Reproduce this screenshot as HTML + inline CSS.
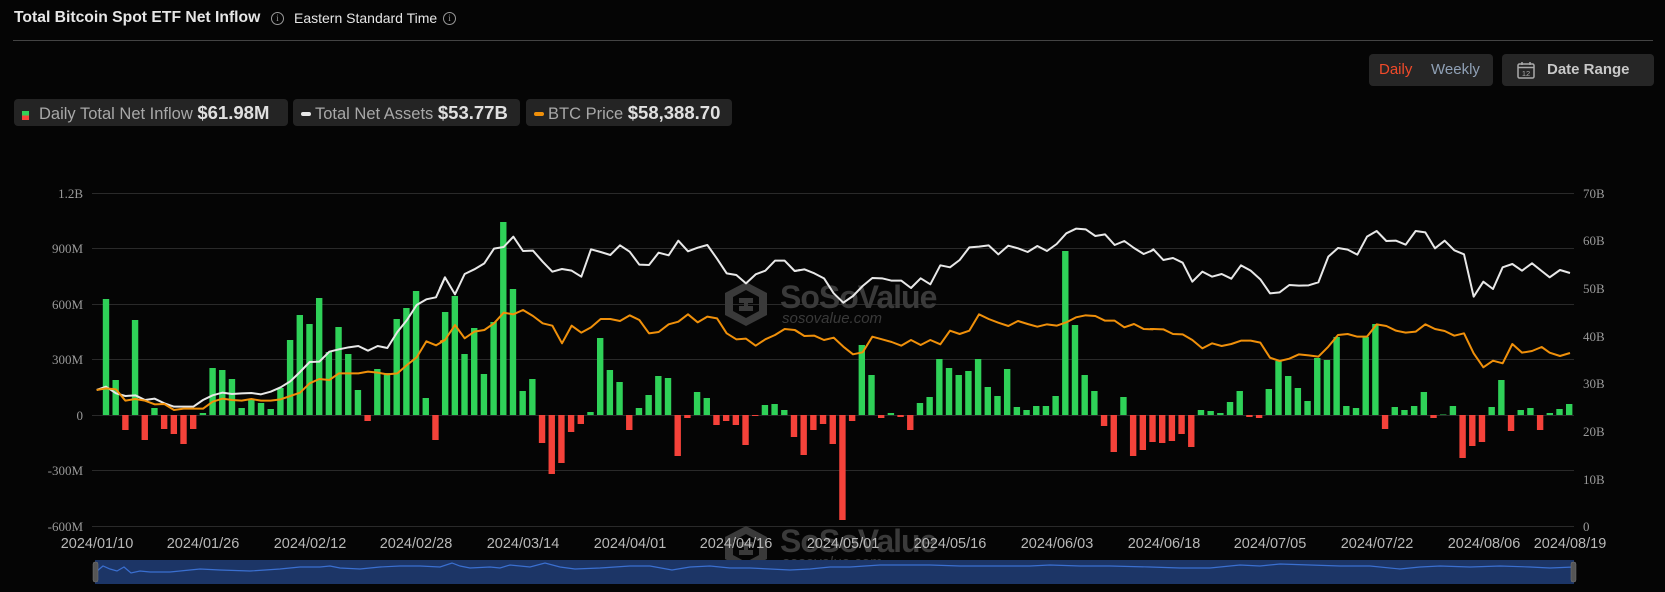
<!DOCTYPE html>
<html><head><meta charset="utf-8"><style>
*{margin:0;padding:0;box-sizing:border-box}
body{width:1665px;height:592px;background:#050505;font-family:"Liberation Sans",sans-serif;position:relative;overflow:hidden;color:#ddd}
.abs{position:absolute}
.title{left:14px;top:9px;font-size:15.7px;font-weight:bold;color:#e6e6e6;white-space:nowrap}
.est{left:294px;top:10px;font-size:14px;color:#e6e6e6;white-space:nowrap}
.info{width:13px;height:13px;border:1px solid #999;border-radius:50%;font-size:9px;color:#999;text-align:center;line-height:11px;font-family:"Liberation Serif",serif}
.sep{left:13px;top:40px;width:1640px;height:1px;background:#444}
.lg{top:99px;height:27px;background:#242424;border-radius:4px;white-space:nowrap;font-size:16.5px;color:#a8a8a8;line-height:27px;padding-left:8px}
.lg b{color:#e0e0e0;font-size:18.5px}
.btn{top:54px;height:32px;background:#262626;border-radius:4px;font-size:15px;line-height:32px}
</style></head><body>
<div class="abs title">Total Bitcoin Spot ETF Net Inflow</div>
<div class="abs info" style="left:271px;top:12px">i</div>
<div class="abs est">Eastern Standard Time</div>
<div class="abs info" style="left:443px;top:12px">i</div>
<div class="abs sep"></div>

<div class="abs btn" style="left:1369px;width:124px"><span style="position:absolute;left:10px;color:#f04a2a">Daily</span><span style="position:absolute;left:62px;color:#8fa0b5">Weekly</span></div>
<div class="abs btn" style="left:1502px;width:152px">
<svg style="position:absolute;left:14px;top:6px" width="20" height="20" viewBox="0 0 20 20"><rect x="2" y="4" width="16" height="14" rx="1.5" fill="none" stroke="#aaa" stroke-width="1.5"/><line x1="2" y1="7.5" x2="18" y2="7.5" stroke="#aaa" stroke-width="1.5"/><line x1="6" y1="2" x2="6" y2="5" stroke="#aaa" stroke-width="1.5"/><line x1="14" y1="2" x2="14" y2="5" stroke="#aaa" stroke-width="1.5"/><text x="10" y="16" font-size="7.5" fill="#aaa" text-anchor="middle" font-family="Liberation Sans">12</text></svg>
<span style="position:absolute;left:45px;font-weight:bold;color:#c8c8c8">Date Range</span></div>

<div class="abs lg" style="left:14px;width:274px"><span style="display:inline-block;width:7px;height:9px;vertical-align:-1px;background:linear-gradient(#2fd158 50%,#f5423a 50%);margin-right:10px"></span>Daily Total Net Inflow <b>$61.98M</b></div>
<div class="abs lg" style="left:293px;width:227px"><span style="display:inline-block;width:10px;height:4px;border-radius:2px;background:#e8e8e8;vertical-align:3px;margin-right:4px"></span>Total Net Assets <b>$53.77B</b></div>
<div class="abs lg" style="left:526px;width:206px"><span style="display:inline-block;width:10px;height:4px;border-radius:2px;background:#f0900a;vertical-align:3px;margin-right:4px"></span>BTC Price <b>$58,388.70</b></div>

<svg class="abs" style="left:0;top:0" width="1665" height="592">
<g stroke="#2a2a2a" stroke-width="1">
<line x1="92" y1="193.5" x2="1574" y2="193.5"/><line x1="92" y1="248.5" x2="1574" y2="248.5"/><line x1="92" y1="304.5" x2="1574" y2="304.5"/><line x1="92" y1="359.5" x2="1574" y2="359.5"/><line x1="92" y1="415.5" x2="1574" y2="415.5"/><line x1="92" y1="470.5" x2="1574" y2="470.5"/><line x1="92" y1="526.5" x2="1574" y2="526.5"/>
</g>
<g font-family="Liberation Serif,serif" font-size="13" fill="#9a9a9a" text-anchor="end">
<text x="83" y="198">1.2B</text><text x="83" y="253">900M</text><text x="83" y="309">600M</text><text x="83" y="364">300M</text><text x="83" y="420">0</text><text x="83" y="475">-300M</text><text x="83" y="531">-600M</text>
</g>
<g font-family="Liberation Serif,serif" font-size="13" fill="#9a9a9a">
<text x="1583" y="198">70B</text><text x="1583" y="245">60B</text><text x="1583" y="293">50B</text><text x="1583" y="341">40B</text><text x="1583" y="388">30B</text><text x="1583" y="436">20B</text><text x="1583" y="484">10B</text><text x="1583" y="531">0</text>
</g>
<g fill="#3a3a3a">
<g transform="translate(725,282)"><path d="M21 0 L42 11 L42 33 L21 44 L0 33 L0 11 Z M21 8 L8 15 L8 29 L21 36 L34 29 L34 15 Z" fill-rule="evenodd"/><path d="M14 16 h14 v5 h-9 v3 h9 v5 h-14 v-5 h9 v-3 h-9z"/></g>
<text x="780" y="308" font-size="32" font-weight="bold" font-family="Liberation Sans,sans-serif" letter-spacing="-1">SoSoValue</text>
<text x="782" y="323" font-size="15" font-style="italic" font-family="Liberation Sans,sans-serif">sosovalue.com</text>
<g transform="translate(725,526)"><path d="M21 0 L42 11 L42 33 L21 44 L0 33 L0 11 Z M21 8 L8 15 L8 29 L21 36 L34 29 L34 15 Z" fill-rule="evenodd"/><path d="M14 16 h14 v5 h-9 v3 h9 v5 h-14 v-5 h9 v-3 h-9z"/></g>
<text x="780" y="552" font-size="32" font-weight="bold" font-family="Liberation Sans,sans-serif" letter-spacing="-1">SoSoValue</text>
<text x="782" y="567" font-size="15" font-style="italic" font-family="Liberation Sans,sans-serif">sosovalue.com</text>
</g>
<g transform="translate(102.8,415) scale(9.69,-1)">
<g fill="#2fd158">
<rect x="0" y="0" width="0.66" height="116"/><rect x="1" y="0" width="0.66" height="35"/><rect x="3" y="0" width="0.66" height="95"/><rect x="5" y="0" width="0.66" height="7"/><rect x="10" y="0" width="0.66" height="2"/><rect x="11" y="0" width="0.66" height="47"/><rect x="12" y="0" width="0.66" height="45"/><rect x="13" y="0" width="0.66" height="36"/><rect x="14" y="0" width="0.66" height="7"/><rect x="15" y="0" width="0.66" height="15"/><rect x="16" y="0" width="0.66" height="12"/><rect x="17" y="0" width="0.66" height="6"/><rect x="18" y="0" width="0.66" height="27"/><rect x="19" y="0" width="0.66" height="75"/><rect x="20" y="0" width="0.66" height="100"/><rect x="21" y="0" width="0.66" height="91"/><rect x="22" y="0" width="0.66" height="117"/><rect x="23" y="0" width="0.66" height="63"/><rect x="24" y="0" width="0.66" height="88"/><rect x="25" y="0" width="0.66" height="61"/><rect x="26" y="0" width="0.66" height="25"/><rect x="28" y="0" width="0.66" height="46"/><rect x="29" y="0" width="0.66" height="42"/><rect x="30" y="0" width="0.66" height="96"/><rect x="31" y="0" width="0.66" height="107"/><rect x="32" y="0" width="0.66" height="124"/><rect x="33" y="0" width="0.66" height="17"/><rect x="35" y="0" width="0.66" height="103"/><rect x="36" y="0" width="0.66" height="119"/><rect x="37" y="0" width="0.66" height="61"/><rect x="38" y="0" width="0.66" height="87"/><rect x="39" y="0" width="0.66" height="41"/><rect x="40" y="0" width="0.66" height="93"/><rect x="41" y="0" width="0.66" height="193"/><rect x="42" y="0" width="0.66" height="126"/><rect x="43" y="0" width="0.66" height="24"/><rect x="44" y="0" width="0.66" height="36"/><rect x="50" y="0" width="0.66" height="3"/><rect x="51" y="0" width="0.66" height="77"/><rect x="52" y="0" width="0.66" height="45"/><rect x="53" y="0" width="0.66" height="33"/><rect x="55" y="0" width="0.66" height="7"/><rect x="56" y="0" width="0.66" height="20"/><rect x="57" y="0" width="0.66" height="39"/><rect x="58" y="0" width="0.66" height="37"/><rect x="61" y="0" width="0.66" height="23"/><rect x="62" y="0" width="0.66" height="17"/><rect x="68" y="0" width="0.66" height="10"/><rect x="69" y="0" width="0.66" height="11"/><rect x="70" y="0" width="0.66" height="5"/><rect x="78" y="0" width="0.66" height="70"/><rect x="79" y="0" width="0.66" height="40"/><rect x="81" y="0" width="0.66" height="2"/><rect x="84" y="0" width="0.66" height="12"/><rect x="85" y="0" width="0.66" height="18"/><rect x="86" y="0" width="0.66" height="56"/><rect x="87" y="0" width="0.66" height="47"/><rect x="88" y="0" width="0.66" height="40"/><rect x="89" y="0" width="0.66" height="44"/><rect x="90" y="0" width="0.66" height="56"/><rect x="91" y="0" width="0.66" height="28"/><rect x="92" y="0" width="0.66" height="19"/><rect x="93" y="0" width="0.66" height="46"/><rect x="94" y="0" width="0.66" height="8"/><rect x="95" y="0" width="0.66" height="5"/><rect x="96" y="0" width="0.66" height="9"/><rect x="97" y="0" width="0.66" height="9"/><rect x="98" y="0" width="0.66" height="19"/><rect x="99" y="0" width="0.66" height="164"/><rect x="100" y="0" width="0.66" height="90"/><rect x="101" y="0" width="0.66" height="40"/><rect x="102" y="0" width="0.66" height="24"/><rect x="105" y="0" width="0.66" height="18"/><rect x="113" y="0" width="0.66" height="5"/><rect x="114" y="0" width="0.66" height="4"/><rect x="115" y="0" width="0.66" height="2"/><rect x="116" y="0" width="0.66" height="13"/><rect x="117" y="0" width="0.66" height="24"/><rect x="120" y="0" width="0.66" height="26"/><rect x="121" y="0" width="0.66" height="54"/><rect x="122" y="0" width="0.66" height="39"/><rect x="123" y="0" width="0.66" height="27"/><rect x="124" y="0" width="0.66" height="14"/><rect x="125" y="0" width="0.66" height="57"/><rect x="126" y="0" width="0.66" height="55"/><rect x="127" y="0" width="0.66" height="78"/><rect x="128" y="0" width="0.66" height="9"/><rect x="129" y="0" width="0.66" height="7"/><rect x="130" y="0" width="0.66" height="78"/><rect x="131" y="0" width="0.66" height="91"/><rect x="133" y="0" width="0.66" height="8"/><rect x="134" y="0" width="0.66" height="5"/><rect x="135" y="0" width="0.66" height="9"/><rect x="136" y="0" width="0.66" height="23"/><rect x="138" y="0" width="0.66" height="0.5"/><rect x="139" y="0" width="0.66" height="9"/><rect x="143" y="0" width="0.66" height="8"/><rect x="144" y="0" width="0.66" height="35"/><rect x="146" y="0" width="0.66" height="5"/><rect x="147" y="0" width="0.66" height="7"/><rect x="149" y="0" width="0.66" height="2"/><rect x="150" y="0" width="0.66" height="6"/><rect x="151" y="0" width="0.66" height="11"/>
</g>
<g fill="#f5423a">
<rect x="2" y="-15" width="0.66" height="15"/><rect x="4" y="-25" width="0.66" height="25"/><rect x="6" y="-14" width="0.66" height="14"/><rect x="7" y="-19" width="0.66" height="19"/><rect x="8" y="-29" width="0.66" height="29"/><rect x="9" y="-14" width="0.66" height="14"/><rect x="27" y="-6" width="0.66" height="6"/><rect x="34" y="-25" width="0.66" height="25"/><rect x="45" y="-28" width="0.66" height="28"/><rect x="46" y="-59" width="0.66" height="59"/><rect x="47" y="-48" width="0.66" height="48"/><rect x="48" y="-17" width="0.66" height="17"/><rect x="49" y="-9" width="0.66" height="9"/><rect x="54" y="-15" width="0.66" height="15"/><rect x="59" y="-41" width="0.66" height="41"/><rect x="60" y="-3" width="0.66" height="3"/><rect x="63" y="-10" width="0.66" height="10"/><rect x="64" y="-6" width="0.66" height="6"/><rect x="65" y="-10" width="0.66" height="10"/><rect x="66" y="-30" width="0.66" height="30"/><rect x="67" y="-1" width="0.66" height="1"/><rect x="71" y="-22" width="0.66" height="22"/><rect x="72" y="-40" width="0.66" height="40"/><rect x="73" y="-15" width="0.66" height="15"/><rect x="74" y="-9" width="0.66" height="9"/><rect x="75" y="-29" width="0.66" height="29"/><rect x="76" y="-105" width="0.66" height="105"/><rect x="77" y="-6" width="0.66" height="6"/><rect x="80" y="-3" width="0.66" height="3"/><rect x="82" y="-2" width="0.66" height="2"/><rect x="83" y="-15" width="0.66" height="15"/><rect x="103" y="-11" width="0.66" height="11"/><rect x="104" y="-37" width="0.66" height="37"/><rect x="106" y="-41" width="0.66" height="41"/><rect x="107" y="-35" width="0.66" height="35"/><rect x="108" y="-27" width="0.66" height="27"/><rect x="109" y="-28" width="0.66" height="28"/><rect x="110" y="-26" width="0.66" height="26"/><rect x="111" y="-19" width="0.66" height="19"/><rect x="112" y="-32" width="0.66" height="32"/><rect x="118" y="-2" width="0.66" height="2"/><rect x="119" y="-3" width="0.66" height="3"/><rect x="132" y="-14" width="0.66" height="14"/><rect x="137" y="-3" width="0.66" height="3"/><rect x="140" y="-43" width="0.66" height="43"/><rect x="141" y="-31" width="0.66" height="31"/><rect x="142" y="-27" width="0.66" height="27"/><rect x="145" y="-16" width="0.66" height="16"/><rect x="148" y="-15" width="0.66" height="15"/>
</g>
</g>
<g fill="none" stroke-width="2" stroke-linejoin="round">
<g stroke="#e8e8e8">
<polyline transform="translate(85,170) scale(0.33333)" vector-effect="non-scaling-stroke" points="35,660 63,650 93,670 121,678 151,676 180,690 209,686 238,700 267,710 296,710 325,710 354,690 383,676 412,668 441,672 470,670 499,669 528,673 557,665 587,652 616,634 645,606 674,576 703,575 733,545 762,538 791,532 820,528 849,542 878,528 907,534 937,486 966,450 995,405 1024,388 1053,382 1080,322"/>
<polyline transform="translate(440,170) scale(0.33333)" vector-effect="non-scaling-stroke" points="0,355 15,322 45,373 74,312 103,298 133,280 162,236 191,231 220,200 249,243 279,242 308,275 337,305 366,297 395,302 424,320 453,238 482,246 511,255 540,226 569,245 598,284 627,285 656,248 686,256 715,212 744,244 773,233 802,225 831,266 860,310 889,315 918,340 947,313 976,302 1005,272 1034,272 1064,303 1080,300"/>
<polyline transform="translate(795,170) scale(0.33333)" vector-effect="non-scaling-stroke" points="0,303 28,298 58,310 87,325 116,370 145,398 174,378 203,348 232,324 261,325 290,332 319,332 348,354 377,325 406,343 436,286 465,292 494,270 523,232 552,230 581,226 610,253 640,227 669,235 698,246 727,228 756,243 785,222 814,190 843,176 872,178 901,198 930,193 959,225 988,213 1017,234 1046,252 1075,240"/>
<polyline transform="translate(1150,170) scale(0.33333)" vector-effect="non-scaling-stroke" points="0,245 10,238 40,270 69,264 98,278 127,335 157,305 186,320 215,312 244,326 273,286 302,302 331,328 360,370 389,367 418,345 447,347 476,346 505,337 535,260 564,234 593,239 622,254 651,200 680,183 709,213 738,212 767,224 797,183 826,187 855,235 884,212 913,241 942,253 971,380 1000,335 1029,357 1058,292 1087,282 1116,302 1146,280 1175,303 1199,322 1230,300 1260,309"/>
</g>
<g stroke="#f0900a">
<polyline transform="translate(85,170) scale(0.33333)" vector-effect="non-scaling-stroke" points="35,660 63,655 93,658 121,692 151,687 180,692 209,703 238,702 267,720 296,716 325,716 354,716 383,695 412,686 441,690 470,692 499,687 528,692 557,692 587,688 616,678 645,668 674,640 703,627 733,630 762,610 791,610 820,610 849,605 878,608 907,613 937,610 966,585 995,562 1024,514 1053,526 1080,510"/>
<polyline transform="translate(440,170) scale(0.33333)" vector-effect="non-scaling-stroke" points="0,515 15,510 45,465 74,505 103,485 133,480 162,460 191,428 220,433 249,420 279,438 308,460 337,467 366,520 395,467 424,488 453,472 482,447 511,447 540,453 569,436 598,450 627,490 656,486 686,463 715,455 744,433 773,457 802,440 831,445 860,490 889,508 918,506 947,527 976,508 1005,495 1034,477 1064,480 1080,490"/>
<polyline transform="translate(795,170) scale(0.33333)" vector-effect="non-scaling-stroke" points="0,480 28,498 58,497 87,510 116,503 145,530 174,553 203,547 232,500 261,508 290,516 319,527 348,510 377,525 406,510 436,523 465,482 494,492 523,482 552,433 581,447 610,458 640,468 669,453 698,462 727,470 756,463 785,467 814,457 843,442 872,436 901,438 930,452 959,452 988,472 1017,462 1046,477 1075,478"/>
<polyline transform="translate(1150,170) scale(0.33333)" vector-effect="non-scaling-stroke" points="0,477 10,477 40,478 69,492 98,493 127,510 157,535 186,520 215,528 244,522 273,512 302,512 331,518 360,563 389,573 418,566 447,553 476,556 505,560 535,530 564,495 593,492 622,500 651,500 680,463 709,468 738,482 767,488 797,485 826,463 855,477 884,483 913,497 942,490 971,550 1000,592 1029,572 1058,580 1087,522 1116,548 1146,543 1175,531 1199,548 1230,558 1260,549"/>
</g>
</g>
<g font-family="Liberation Sans,sans-serif" font-size="14.5" fill="#b8b8b8" text-anchor="middle">
<text x="97" y="548">2024/01/10</text><text x="203" y="548">2024/01/26</text><text x="310" y="548">2024/02/12</text><text x="416" y="548">2024/02/28</text><text x="523" y="548">2024/03/14</text><text x="630" y="548">2024/04/01</text><text x="736" y="548">2024/04/16</text><text x="843" y="548">2024/05/01</text><text x="950" y="548">2024/05/16</text><text x="1057" y="548">2024/06/03</text><text x="1164" y="548">2024/06/18</text><text x="1270" y="548">2024/07/05</text><text x="1377" y="548">2024/07/22</text><text x="1484" y="548">2024/08/06</text><text x="1570" y="548">2024/08/19</text>
</g>
<rect x="95" y="560" width="1479" height="24" fill="#1c3566"/>
<polyline fill="none" stroke="#3a6fd0" stroke-width="1.2" points="97,571 103,566 110,569 117,571 124,567 131,573 140,571 150,572 170,572 190,570 200,569 220,570 250,571 280,569 300,567 320,567 330,566 340,568 360,569 380,567 400,566 420,566 440,567 452,563 460,566 470,568 490,567 500,568 510,565 530,567 545,563 560,567 575,569 600,568 630,566 650,566 672,570 690,567 710,566 730,568 750,568 770,569 790,570 810,569 830,567 850,567 880,565 900,565 930,565 960,566 1000,566 1030,566 1050,565 1080,566 1110,566 1150,567 1180,568 1210,568 1240,565 1260,566 1280,564 1310,565 1340,566 1370,566 1400,569 1420,567 1440,566 1470,567 1500,566 1530,567 1550,568 1574,567"/>
<rect x="93" y="562" width="5" height="20" rx="2" fill="#555" stroke="#777" stroke-width="0.5"/>
<rect x="1571" y="562" width="5" height="20" rx="2" fill="#555" stroke="#777" stroke-width="0.5"/>
</svg>
</body></html>
